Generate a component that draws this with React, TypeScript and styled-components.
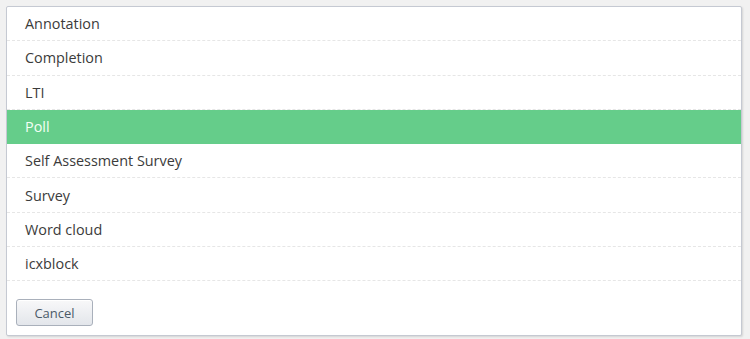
import React from "react";
import styled, { createGlobalStyle } from "styled-components";

const Global = createGlobalStyle`
  html, body { margin: 0; padding: 0; background: #f1f1f1; }
  body { font-family: "Open Sans", "Noto Sans", sans-serif; }
`;

const Page = styled.div`
  padding: 6px 8px 3px 6px;
`;

const Panel = styled.div`
  box-sizing: border-box;
  background: #ffffff;
  border: 1px solid #c5c9d2;
  border-radius: 2px;
  box-shadow: 1px 1px 2px rgba(0, 0, 0, 0.12);
  display: flex;
  flex-direction: column;
  height: 330px;
`;

const List = styled.ul`
  list-style: none;
  margin: 0;
  padding: 0;
`;

const Item = styled.li<{ $selected?: boolean }>`
  padding: 7.15px 18px;
  font-size: 14.4px;
  line-height: 19px;
  color: ${(p) => (p.$selected ? "#f4fff6" : "#3b3b3b")};
  background: ${(p) => (p.$selected ? "#65cd8a" : "transparent")};
  border-bottom: 1px dashed ${(p) => (p.$selected ? "#65cd8a" : "#e6e6e6")};
`;

const Footer = styled.div`
  padding: 17px 9px 9px;
  margin-top: auto;
`;

const Button = styled.button`
  width: 77px;
  height: 27px;
  font-family: "Open Sans", "Noto Sans", sans-serif;
  font-size: 13px;
  color: #4b5a68;
  background: linear-gradient(#f8f8f9, #e3e6eb);
  border: 1px solid #a9b0bb;
  border-radius: 3px;
  box-shadow: inset 0 1px 0 #ffffff;
  padding: 0;
`;

const items = [
  "Annotation",
  "Completion",
  "LTI",
  "Poll",
  "Self Assessment Survey",
  "Survey",
  "Word cloud",
  "icxblock",
];

export default function App() {
  return (
    <>
      <Global />
      <Page>
        <Panel>
          <List>
            {items.map((t) => (
              <Item key={t} $selected={t === "Poll"}>
                {t}
              </Item>
            ))}
          </List>
          <Footer>
            <Button>Cancel</Button>
          </Footer>
        </Panel>
      </Page>
    </>
  );
}
